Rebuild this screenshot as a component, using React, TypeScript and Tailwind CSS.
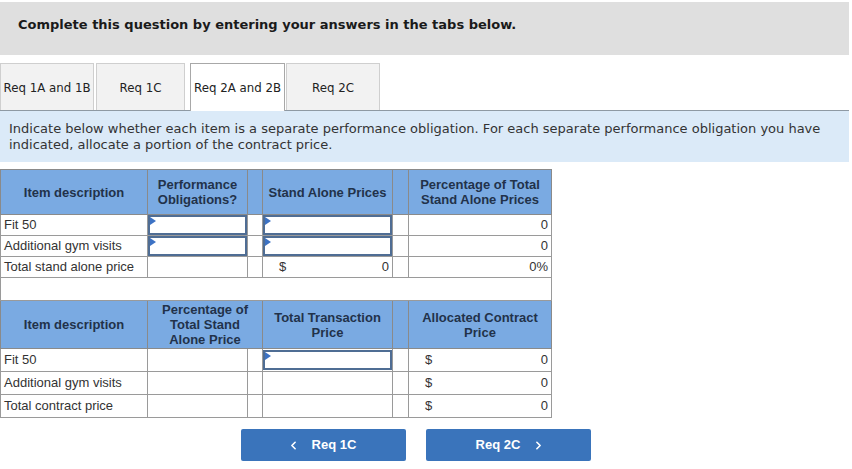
import React from 'react';
import { ChevronLeft, ChevronRight } from 'lucide-react';

const cell = 'border border-[#9a9a9a] px-[3px] align-middle';
const head = 'border border-[#8a8a8a] bg-[#7aaae2] text-center font-bold text-[#22324a] leading-[15px]';

const InputBox: React.FC = () => (
  <div className="relative h-[20px] border-2 border-[#4f6d94] bg-white">
    <span className="absolute left-0 top-0 w-0 h-0 border-t-[4px] border-b-[4px] border-l-[6px] border-t-transparent border-b-transparent border-l-[#3c72c4]" />
  </div>
);

const App: React.FC = () => {
  const tabs = [
    { label: 'Req 1A and 1B', cls: 'w-[94px]' },
    { label: 'Req 1C', cls: 'w-[89px] ml-[2px]' },
    { label: 'Req 2A and 2B', cls: 'w-[95px] ml-[5px]', active: true },
    { label: 'Req 2C', cls: 'w-[94px] ml-[1px]' },
  ];

  return (
    <div className="w-[852px] h-[469px] bg-white overflow-hidden pt-[2px]">
      <div className="w-[849px]">
        {/* Header */}
        <div className="h-[53px] bg-[#dfdfdf] flex items-center pl-[18px] pb-[7px] font-['DejaVu_Sans',Verdana,sans-serif] font-bold text-[13px] text-[#1a1a1a]">
          Complete this question by entering your answers in the tabs below.
        </div>

        {/* Tabs */}
        <div className="mt-[8px] flex items-end border-b border-[#8e99a3] font-['DejaVu_Sans',Verdana,sans-serif] text-[11.8px] text-[#222]">
          {tabs.map((t) => (
            <div
              key={t.label}
              className={`${t.cls} h-[47px] pt-[4px] flex items-center justify-center whitespace-nowrap border border-b-0 ${
                t.active ? 'bg-white border-[#a8a8a8] -mb-px h-[48px] pb-px' : 'bg-[#f2f2f2] border-[#cfcfcf]'
              }`}
            >
              {t.label}
            </div>
          ))}
        </div>

        {/* Instructions */}
        <div className="h-[51px] bg-[#dbeaf8] px-[9px] pt-[10px] font-['DejaVu_Sans',Verdana,sans-serif] text-[13px] leading-[16px] text-[#333]">
          Indicate below whether each item is a separate performance obligation. For each separate performance obligation you have indicated, allocate a portion of the contract price.
        </div>

        {/* Table */}
        <table className="mt-[7px] table-fixed border-collapse w-[551px] font-['Liberation_Sans',Arial,sans-serif] text-[13px] text-[#333]">
          <colgroup>
            <col className="w-[147px]" />
            <col className="w-[100px]" />
            <col className="w-[15px]" />
            <col className="w-[130px]" />
            <col className="w-[16px]" />
            <col className="w-[143px]" />
          </colgroup>
          <tbody>
            <tr className="h-[45px]">
              <td className={head}>Item description</td>
              <td className={head}>Performance<br />Obligations?</td>
              <td className={head}></td>
              <td className={head}>Stand Alone Prices</td>
              <td className={head}></td>
              <td className={head}>Percentage of Total<br />Stand Alone Prices</td>
            </tr>
            {['Fit 50', 'Additional gym visits'].map((label) => (
              <tr key={label} className="h-[21px]">
                <td className={cell}>{label}</td>
                <td className="border border-[#9a9a9a] p-0"><InputBox /></td>
                <td className={cell}></td>
                <td className="border border-[#9a9a9a] p-0"><InputBox /></td>
                <td className={cell}></td>
                <td className={`${cell} text-right`}>0</td>
              </tr>
            ))}
            <tr className="h-[21px]">
              <td className={cell}>Total stand alone price</td>
              <td className={cell}></td>
              <td className={cell}></td>
              <td className={`${cell} border-t-[#222]`}>
                <div className="flex justify-between pl-[13px]">
                  <span>$</span>
                  <span>0</span>
                </div>
              </td>
              <td className={cell}></td>
              <td className={`${cell} text-right`}>0%</td>
            </tr>
            <tr className="h-[23px]">
              <td colSpan={6} className="border border-[#9a9a9a]"></td>
            </tr>
            <tr className="h-[48px]">
              <td className={head}>Item description</td>
              <td colSpan={2} className={head}>Percentage of<br />Total Stand<br />Alone Price</td>
              <td className={head}>Total Transaction<br />Price</td>
              <td className={head}></td>
              <td className={head}>Allocated Contract<br />Price</td>
            </tr>
            {['Fit 50', 'Additional gym visits', 'Total contract price'].map((label, i) => (
              <tr key={label} className="h-[23px]">
                <td className={cell}>{label}</td>
                <td className={cell}></td>
                <td className={cell}></td>
                {i === 0 ? (
                  <td className="border border-[#9a9a9a] p-0"><InputBox /></td>
                ) : (
                  <td className={cell}></td>
                )}
                <td className={cell}></td>
                <td className={cell}>
                  <div className="flex justify-between pl-[13px]">
                    <span>$</span>
                    <span>0</span>
                  </div>
                </td>
              </tr>
            ))}
          </tbody>
        </table>

        {/* Navigation */}
        <div className="mt-[11px] w-[832px] flex justify-center gap-[20px] font-['Liberation_Sans',Arial,sans-serif] text-[13px] font-bold text-white">
          <button className="w-[165px] h-[32px] rounded-[2px] bg-[#3a74bb] flex items-center justify-center gap-[12px] pr-[4px]">
            <ChevronLeft size={13} strokeWidth={3} />
            <span>Req 1C</span>
          </button>
          <button className="w-[165px] h-[32px] rounded-[2px] bg-[#3a74bb] flex items-center justify-center gap-[12px] pl-[4px]">
            <span>Req 2C</span>
            <ChevronRight size={13} strokeWidth={3} />
          </button>
        </div>
      </div>
    </div>
  );
};

export default App;
